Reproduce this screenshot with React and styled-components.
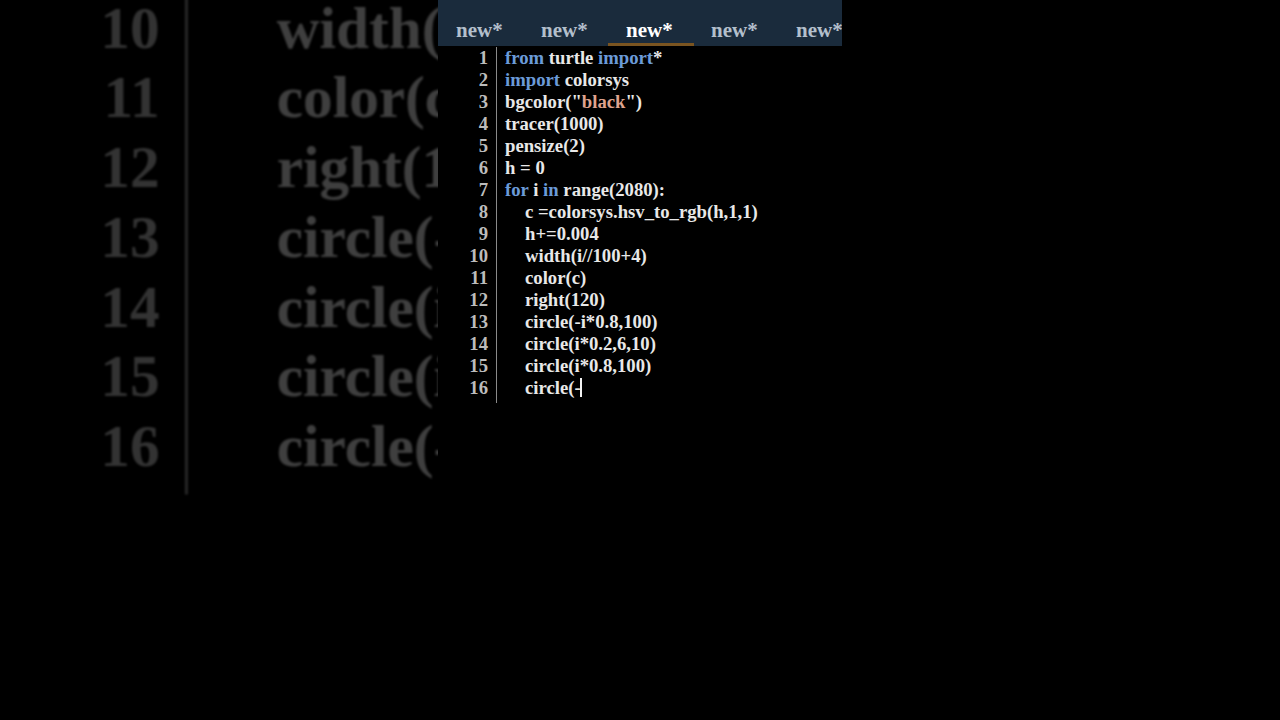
import React from 'react';
import styled, { createGlobalStyle } from 'styled-components';

const GlobalStyle = createGlobalStyle`
  html, body {
    margin: 0;
    padding: 0;
    background: #000;
  }
  body {
    font-family: "Liberation Serif", "Times New Roman", serif;
  }
`;

const Screen = styled.div`
  display: flex;
  width: 1280px;
  height: 720px;
  background: #000;
  overflow: hidden;
`;

// zoomed, dimmed copy of the editor used as a video-style backdrop
const Backdrop = styled.div`
  position: relative;
  width: 438px;
  height: 720px;
  flex-shrink: 0;
  overflow: hidden;
`;

const BackdropLayer = styled.div`
  position: absolute;
  left: 1px;
  top: -783px;
  transform: scale(3.17);
  transform-origin: 0 0;
  opacity: 0.27;
  filter: blur(0.4px);
`;

const Panel = styled.div`
  width: 404px;
  flex-shrink: 0;
  background: #000;
`;

const Filler = styled.div`
  flex: 1;
`;

const TabBar = styled.div`
  display: flex;
  align-items: flex-end;
  height: 46px;
  padding-left: 18px;
  background: #1a2b3c;
  overflow: hidden;
  box-sizing: border-box;
`;

const Tab = styled.div`
  flex: 0 0 85px;
  position: relative;
  height: 46px;
  box-sizing: border-box;
  padding-top: 16px;
  font-size: 21px;
  font-weight: bold;
  line-height: 28px;
  color: ${p => (p.active ? '#ffffff' : '#b3bfcb')};
  white-space: nowrap;

  &::after {
    content: '';
    display: ${p => (p.active ? 'block' : 'none')};
    position: absolute;
    left: -18px;
    bottom: 0;
    width: 86px;
    height: 3px;
    background: #7a5420;
  }
`;

const Code = styled.div`
  display: flex;
  padding-top: 1px;
  font-size: 18.7px;
  font-weight: bold;
  line-height: 22px;
`;

const Gutter = styled.div`
  width: 50px;
  padding-right: 8px;
  padding-bottom: 4px;
  text-align: right;
  color: #bcbcbc;
  border-right: 1px solid #8a8a8a;
  box-sizing: content-box;
`;

const Lines = styled.div`
  padding-left: 8px;
  color: #e8e8e8;
  white-space: pre;
`;

const Line = styled.div`
  padding-left: ${p => (p.indent ? 20 : 0)}px;
  height: 22px;
`;

const Kw = styled.span`
  color: #6b9bd8;
`;

const Str = styled.span`
  color: #dfa38e;
`;

const Caret = styled.span`
  display: inline-block;
  width: 2px;
  height: 19px;
  margin-left: -1px;
  vertical-align: -3px;
  background: #f2f2f2;
`;

const lines = [
  { id: 1, body: <><Kw>from</Kw> turtle <Kw>import</Kw>*</> },
  { id: 2, body: <><Kw>import</Kw> colorsys</> },
  { id: 3, body: <>bgcolor(&quot;<Str>black</Str>&quot;)</> },
  { id: 4, body: 'tracer(1000)' },
  { id: 5, body: 'pensize(2)' },
  { id: 6, body: 'h = 0' },
  { id: 7, body: <><Kw>for</Kw> i <Kw>in</Kw> range(2080):</> },
  { id: 8, indent: true, body: 'c =colorsys.hsv_to_rgb(h,1,1)' },
  { id: 9, indent: true, body: 'h+=0.004' },
  { id: 10, indent: true, body: 'width(i//100+4)' },
  { id: 11, indent: true, body: 'color(c)' },
  { id: 12, indent: true, body: 'right(120)' },
  { id: 13, indent: true, body: 'circle(-i*0.8,100)' },
  { id: 14, indent: true, body: 'circle(i*0.2,6,10)' },
  { id: 15, indent: true, body: 'circle(i*0.8,100)' },
  { id: 16, indent: true, body: <>circle(-<Caret /></> },
];

const tabs = [1, 2, 3, 4, 5];

const Editor = () => (
  <Panel>
    <TabBar>
      {tabs.map(t => (
        <Tab key={t} active={t === 3}>new*</Tab>
      ))}
    </TabBar>
    <Code>
      <Gutter>
        {lines.map(l => <div key={l.id}>{l.id}</div>)}
      </Gutter>
      <Lines>
        {lines.map(l => (
          <Line key={l.id} indent={l.indent}>{l.body}</Line>
        ))}
      </Lines>
    </Code>
  </Panel>
);

const App = () => (
  <>
    <GlobalStyle />
    <Screen>
      <Backdrop>
        <BackdropLayer>
          <Editor />
        </BackdropLayer>
      </Backdrop>
      <Editor />
      <Filler />
    </Screen>
  </>
);

export default App;
